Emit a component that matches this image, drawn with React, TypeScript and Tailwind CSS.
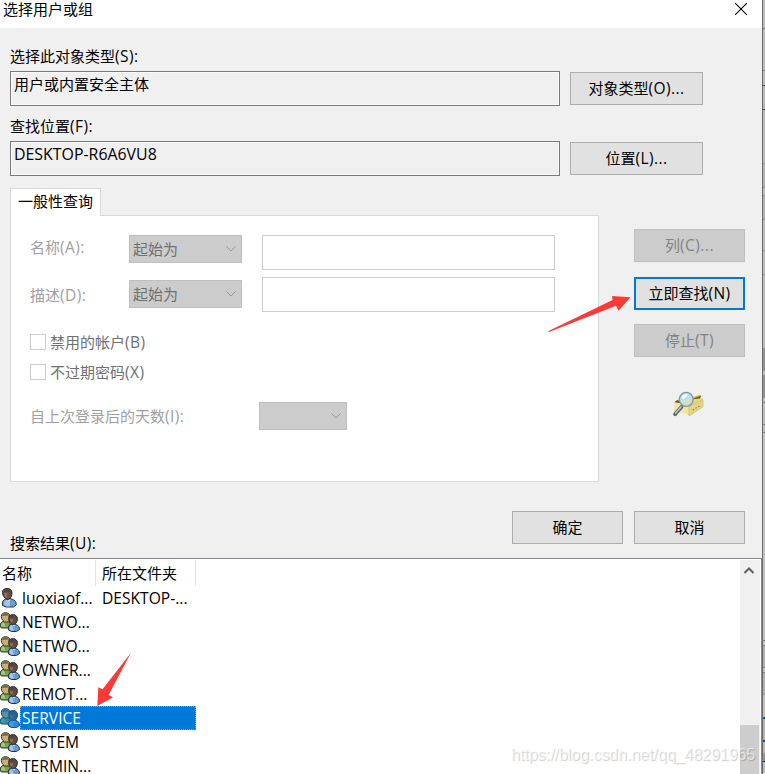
import React from 'react';
import clsx from 'clsx';

type ButtonProps = {
  children: React.ReactNode;
  className?: string;
  disabled?: boolean;
  primary?: boolean;
};

// latin tail of a label, e.g. the accelerator key
function Key({ children }: { children: React.ReactNode }) {
  return <span className="text-[15.5px] tracking-[0.45px]">{children}</span>;
}

function DialogButton({ children, className, disabled, primary }: ButtonProps) {
  return (
    <button
      disabled={disabled}
      className={clsx(
        'flex h-[33px] shrink-0 items-center justify-center whitespace-nowrap',
        disabled && 'border border-[#bfbfbf] bg-[#cccccc] text-[#838383]',
        primary && 'border-2 border-[#0078d7] bg-[#e1e1e1]',
        !disabled && !primary && 'border border-[#adadad] bg-[#e1e1e1]',
        className,
      )}
    >
      <span>{children}</span>
    </button>
  );
}

function ReadonlyField({ children }: { children: React.ReactNode }) {
  return (
    <div className="h-[35px] w-[550px] border border-[#7a7a7a] bg-[#f0f0f0] px-[3px] pt-[2px] leading-5 shadow-[inset_0_0_0_1px_#fafafa]">
      {children}
    </div>
  );
}

function DisabledSelect({ text, className }: { text?: string; className: string }) {
  return (
    <div
      className={clsx(
        'flex h-[28px] shrink-0 items-center justify-between border border-[#bfbfbf] bg-[#cccccc] pr-[5px] pl-[3px] text-[#707070]',
        className,
      )}
    >
      <span>{text}</span>
      <svg width="10" height="6" viewBox="0 0 10 6" fill="none" stroke="#989898">
        <path d="M.5.5 5 5 9.5.5" />
      </svg>
    </div>
  );
}

function DisabledCheckbox({ children }: { children: React.ReactNode }) {
  return (
    <div className="flex h-[16px] items-center gap-[4px] text-[#707070]">
      <span className="size-[16px] border border-[#cccccc] bg-white" />
      <span className="leading-4">{children}</span>
    </div>
  );
}

function UserIcon() {
  return (
    <svg width="20" height="20" viewBox="0 0 20 20" className="shrink-0">
      <path
        d="M2.500 17.500c-.3-3.800.3-5.300 3-6.500l4-.8 3.300 1.300c2.500.8 3.500 2.800 3.500 5.500l-2.800 2H6z"
        fill="#6f9fd2"
        stroke="#253747"
      />
      <path d="M4 16c.2-2.500 1-3.500 3-4l3 2.500-.5 4H6.500z" fill="#a0c6ec" />
      <path d="m7 11.500 2 2.500 1.500-2.500z" fill="#d5e3f1" />
      <path
        d="M2.500 4.500C2.500 1.500 4.300.5 7 .5s5 1.300 5 4-.8 6-3.800 7C5.500 11.500 2.800 8.500 2.500 4.500z"
        fill="#6b5040"
        stroke="#292725"
      />
      <path d="M3.200 4C3.800 1.300 6 .8 8 1.300s3.500 2 3.500 4.500L9.500 4z" fill="#4a4742" />
      <path d="M4 5h3.500l-.5 5C5 9 4 7 4 5z" fill="#93705c" />
    </svg>
  );
}

function GroupIcon({ selected }: { selected?: boolean }) {
  return (
    <svg width="20" height="20" viewBox="0 0 20 20" className="shrink-0">
      <path
        d="M.3 15c-.3-3 .2-4.500 2.500-5.500l3-.5 4 1.500 1 5.500H2z"
        fill="#7aa350"
        stroke="#293820"
      />
      <path d="M1 14c.3-2.300 1-3.300 2.500-3.500l2 4.500z" fill="#aacb80" />
      <path
        d="M1.300 4.500C1.300 2 3 .7 5.500.7s4.500 1.300 4.500 3.800-1.200 5.800-3.700 5.800-5-2.800-5-5.800z"
        fill="#c9ae7a"
        stroke="#39351f"
      />
      <path d="M2 4C2.300 1.800 4 1 5.800 1s3.800 1.500 3.600 4.500L7.500 3.500z" fill="#6f6c40" />
      <path
        d="M8.500 18c-.5-3.500.3-5 2.500-5.800l3-.5 3 1.300c1.800.8 2.500 2.300 2.500 4.500l-3 2h-5z"
        fill="#6a9acf"
        stroke="#21364a"
      />
      <path d="M9.500 17c0-2.500 1-3.500 2.500-4l2 5.500h-3z" fill="#a2c8ec" />
      <path d="m12.500 12.800 1.500 2 1.300-2z" fill="#d5e3f1" />
      <path
        d="M8.700 6.500c0-2.500 1.700-3.900 4.200-3.900s4.500 1.600 4.500 4.200-1.400 5.700-3.800 5.700-4.900-2.800-4.900-6z"
        fill="#684d3d"
        stroke="#272827"
      />
      <path d="M9.400 6c.3-2 1.800-2.900 3.700-2.900s3.700 1.700 3.700 4.100L15 5.500z" fill="#494843" />
      <path d="M9.800 7h3l-.5 4C11 10.500 9.800 9 9.800 7z" fill="#93705c" />
      {selected && (
        <path
          d="M0 15.500C-.3 11 1 9.500 2.500 8.800.300 5 1 .2 5.500.2c2.500 0 3.800 1 4.200 2.500 3.300-1.500 8-.5 8.200 3.800 0 2-.5 4-1.800 5.700 3 .8 3.900 2.800 3.900 5.500l-3.200 2.300h-5.300l-3.500-2.500L8 16H2z"
          fill="#0078d7"
          opacity=".55"
        />
      )}
    </svg>
  );
}

function SearchBookIcon() {
  return (
    <svg width="32" height="26" viewBox="0 0 34 28">
      <path d="m1 12 10-6 21 2-13 9z" fill="#e6d581" />
      <path d="m1 12 3-2 8 1 2 3z" fill="#69531f" />
      <path d="m17 8 12-4 1 2-9 4z" fill="#e0ad24" />
      <path d="m20 9 10-4-1 3z" fill="#745717" />
      <path d="m1 12 16 4v10L1 21z" fill="#f1e6a0" />
      <path d="m17 17 15-8v8l-15 10z" fill="#e3d685" stroke="#c4b25e" strokeWidth=".6" />
      <path d="m21 20.500 9-5.500" stroke="#817635" strokeWidth="1.200" strokeDasharray="1.500 2" />
      <path d="m9 17-7 8" stroke="#60646b" strokeWidth="4" strokeLinecap="round" />
      <path d="m8.500 17-6 7" stroke="#bfc4cd" strokeWidth="1.500" strokeLinecap="round" />
      <circle cx="14" cy="9" r="7.500" fill="#bddff2" stroke="#8098b0" strokeWidth="1.500" />
      <path d="m8.500 11 11-3c.3 4-1.500 6-5 6.500-3 0-5-1.500-6-3.500z" fill="#dfdfaa" opacity=".8" />
      <path d="M9 7c1-3 4-4 7-3l-5 5z" fill="#f4fbff" />
    </svg>
  );
}

// narrow part of the window that sits behind the dialog
const sliver = [
  { h: 28, c: 'bg-[#bdbdbd]' },
  { h: 1, c: 'bg-[#777777]' },
  { h: 41, c: 'bg-[#bcbcbc]' },
  { h: 1, c: 'bg-[#888888]' },
  { h: 14, c: 'bg-[#bcbcbc]' },
  { h: 1, c: 'bg-[#484848]' },
  { h: 23, c: 'bg-[#bababa]' },
  { h: 1, c: 'bg-[#484848]' },
  { h: 53, c: 'bg-[#bababa]' },
  { h: 1, c: 'bg-[#929292]' },
  { h: 23, c: 'bg-[#b4b4b4]' },
  { h: 1, c: 'bg-[#929292]' },
  { h: 7, c: 'bg-[#bdbdbd]' },
  { h: 1, c: 'bg-[#929292]' },
  { h: 23, c: 'bg-[#b4b4b4]' },
  { h: 1, c: 'bg-[#929292]' },
  { h: 30, c: 'bg-[#bdbdbd]' },
  { h: 1, c: 'bg-[#929292]' },
  { h: 23, c: 'bg-[#bdbdbd]' },
  { h: 1, c: 'bg-[#929292]' },
  { h: 73, c: 'bg-[#bdbdbd]' },
  { h: 23, c: 'bg-[#929292]' },
  { h: 4, c: 'bg-[#bdbdbd]' },
  { h: 23, c: 'bg-[#929292]' },
  { h: 4, c: 'bg-[#bdbdbd]' },
  { h: 1, c: 'bg-[#838383]' },
  { h: 21, c: 'bg-[#bdbdbd]' },
  { h: 1, c: 'bg-[#838383]' },
  { h: 7, c: 'bg-[#bdbdbd]' },
  { h: 1, c: 'bg-[#838383]' },
  { h: 207, c: 'bg-[#c2c2c2]' },
  { h: 1, c: 'bg-[#838383]' },
  { h: 4, c: 'bg-[#c2c2c2]' },
  { h: 1, c: 'bg-[#838383]' },
  { h: 21, c: 'bg-[#afafaf]' },
  { h: 1, c: 'bg-[#838383]' },
  { h: 4, c: 'bg-[#c2c2c2]' },
  { h: 1, c: 'bg-[#838383]' },
  { h: 21, c: 'bg-[#afafaf]' },
  { h: 1, c: 'bg-[#929292]' },
  { h: 22, c: 'bg-[#c2c2c2]' },
  { h: 2, c: 'bg-[#005a9e]' },
  { h: 21, c: 'bg-[#b2b2b2]' },
  { h: 2, c: 'bg-[#005a9e]' },
  { h: 11, c: 'bg-[#b8b8b8]' },
  { h: 8, c: 'bg-[#999999]' },
  { h: 1, c: 'bg-[#1e2732]' },
  { h: 11, c: 'bg-[#b4bdc7]' },
];

const results = [
  { name: 'luoxiaof...', folder: 'DESKTOP-...', user: true },
  { name: 'NETWO...' },
  { name: 'NETWO...' },
  { name: 'OWNER...' },
  { name: 'REMOT...' },
  { name: 'SERVICE', selected: true },
  { name: 'SYSTEM' },
  { name: 'TERMIN...' },
];

function ResultList() {
  return (
    <div className="flex h-[216px] w-[762px] overflow-hidden border-t border-r border-[#828790] bg-white">
      <div className="flex grow flex-col">
        <div className="flex h-[27px] shrink-0 pt-px leading-[26px]">
          <div className="w-[96px] border-r border-[#e5e5e5] pl-[2px]">名称</div>
          <div className="w-[100px] border-r border-[#e5e5e5] pl-[6px]">所在文件夹</div>
        </div>
        {results.map((row, i) => (
          <div key={i} className="flex h-[24px] w-[196px] shrink-0 items-center">
            {row.user ? <UserIcon /> : <GroupIcon selected={row.selected} />}
            <div
              className={clsx(
                'flex h-[24px] grow items-center text-[15.6px] leading-[22px]',
                row.selected
                  ? 'border border-dotted border-[#ff8728] bg-[#0078d7] pl-px text-white'
                  : 'pb-px pl-[2px]',
              )}
            >
              <span className="w-[80px] whitespace-nowrap">{row.name}</span>
              <span className="whitespace-nowrap">{row.folder}</span>
            </div>
          </div>
        ))}
      </div>
      <div className="mt-px mr-px flex w-[20px] flex-col items-start bg-[#f0f0f0]">
        <svg
          width="10"
          height="7"
          viewBox="0 0 10 7"
          className="mt-[7px] ml-[4px] shrink-0"
          fill="none"
          stroke="#606060"
          strokeWidth="2"
        >
          <path d="M.5 6 5 1.500 9.500 6" />
        </svg>
        <div className="mt-[151px] h-[49px] w-[19px] shrink-0 bg-[#cdcdcd]" />
      </div>
    </div>
  );
}

export default function App() {
  return (
    <div className="relative flex h-[774px] w-[765px] overflow-hidden bg-[#f0f0f0] font-['Open_Sans','Noto_Sans_CJK_SC',sans-serif] text-[15px] text-black">
      <div className="flex w-[762px] shrink-0 flex-col">
        <header className="flex h-[28px] shrink-0 items-start justify-between bg-white pr-[15px] pl-[3px]">
          <span className="leading-[19px]">选择用户或组</span>
          <svg width="12" height="12" viewBox="0 0 12 12" className="mt-[3px]" stroke="#000" strokeWidth="1.100">
            <path d="m0 0 12 12M12 0 0 12" />
          </svg>
        </header>

        <section className="flex h-[160px] shrink-0 flex-col pt-[18px] pl-[10px]">
          <div className="h-[25px] leading-[20px]">
            选择此对象类型<Key>(S):</Key>
          </div>
          <div className="flex h-[35px] items-center gap-[10px]">
            <ReadonlyField>用户或内置安全主体</ReadonlyField>
            <DialogButton className="w-[133px]">
              对象类型<Key>(O)...</Key>
            </DialogButton>
          </div>
          <div className="mt-[10px] h-[25px] leading-[20px]">
            查找位置<Key>(F):</Key>
          </div>
          <div className="flex h-[35px] items-center gap-[10px]">
            <ReadonlyField>
              <span className="text-[15.9px]">DESKTOP-R6A6VU8</span>
            </ReadonlyField>
            <DialogButton className="w-[133px]">
              位置<Key>(L)...</Key>
            </DialogButton>
          </div>
        </section>

        <section className="flex h-[294px] shrink-0 pl-[10px]">
          <div className="flex w-[589px] flex-col">
            <div className="z-10 flex h-[28px] w-[91px] shrink-0 justify-center border border-b-0 border-[#d9d9d9] bg-white leading-[25px]">
              一般性查询
            </div>
            <div className="-mt-px h-[267px] border border-[#d9d9d9] bg-white pt-[19px] pl-[19px]">
              <div className="flex h-[42px] items-start">
                <span className="w-[99px] leading-[24px] text-[#a0a0a0]">
                  名称<Key>(A):</Key>
                </span>
                <DisabledSelect text="起始为" className="w-[113px]" />
                <div className="ml-[20px] h-[35px] w-[293px] border border-[#cccccc]" />
              </div>
              <div className="flex h-[35px] items-start">
                <span className="mt-[6px] w-[99px] leading-[24px] text-[#a0a0a0]">
                  描述<Key>(D):</Key>
                </span>
                <DisabledSelect text="起始为" className="mt-[3px] w-[113px]" />
                <div className="ml-[20px] h-[35px] w-[293px] border border-[#cccccc]" />
              </div>
              <div className="mt-[22px] flex flex-col gap-[14px]">
                <DisabledCheckbox>
                  禁用的帐户<Key>(B)</Key>
                </DisabledCheckbox>
                <DisabledCheckbox>
                  不过期密码<Key>(X)</Key>
                </DisabledCheckbox>
              </div>
              <div className="mt-[22px] flex h-[28px] items-center">
                <span className="w-[229px] pt-[2px] text-[#a0a0a0]">
                  自上次登录后的天数<Key>(I):</Key>
                </span>
                <DisabledSelect className="w-[88px]" />
              </div>
            </div>
          </div>
          <div className="ml-[35px] flex flex-col pt-[41px]">
            <DialogButton className="w-[111px]" disabled>
              列<Key>(C)...</Key>
            </DialogButton>
            <DialogButton className="mt-[15px] w-[111px]" primary>
              立即查找<Key>(N)</Key>
            </DialogButton>
            <DialogButton className="mt-[14px] w-[111px]" disabled>
              停止<Key>(T)</Key>
            </DialogButton>
            <div className="mt-[34px] pl-[39px]">
              <SearchBookIcon />
            </div>
          </div>
        </section>

        <section className="flex h-[76px] shrink-0 items-start justify-between pr-[17px] pl-[10px]">
          <span className="mt-[51px] leading-[20px]">
            搜索结果<Key>(U):</Key>
          </span>
          <div className="mt-[29px] flex gap-[11px]">
            <DialogButton className="w-[111px]">确定</DialogButton>
            <DialogButton className="w-[111px]">取消</DialogButton>
          </div>
        </section>

        <ResultList />
      </div>

      <div className="w-px shrink-0 bg-[#6b6b6b]" />
      <div className="flex w-[2px] shrink-0 flex-col">
        {sliver.map((s, i) => (
          <div key={i} className={clsx('shrink-0', s.c)} style={{ height: s.h }} />
        ))}
      </div>

      <svg width="84" height="38" viewBox="0 0 84 38" className="absolute top-[295px] left-[547px] z-20">
        <path d="M1 36.300 65.500 5 65 1l18.500 1.300-12 13.500-2.500-5L2 37z" fill="#fd3a38" />
      </svg>
      <svg width="36" height="56" viewBox="0 0 36 56" className="absolute top-[652px] left-[96px] z-20">
        <path d="M1.300 54 2.300 35.300 6.500 37.300 35 .7 12.500 43 17 45.300z" fill="#fd3a38" />
      </svg>
      <div className="absolute top-[745px] left-[511px] z-20 font-['Liberation_Sans',sans-serif] text-[16px] leading-5 tracking-[-0.04px] whitespace-nowrap text-white/60 [text-shadow:1px_1px_1px_rgba(0,0,0,0.2)]">
        https://blog.csdn.net/qq_48291965
      </div>
    </div>
  );
}
